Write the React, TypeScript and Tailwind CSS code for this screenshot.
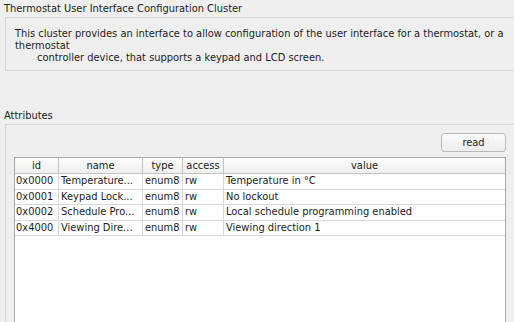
const rows = [
  { id: '0x0000', name: 'Temperature...', type: 'enum8', access: 'rw', value: 'Temperature in °C', h: 'h-[16px]' },
  { id: '0x0001', name: 'Keypad Lock...', type: 'enum8', access: 'rw', value: 'No lockout', h: 'h-[15px]' },
  { id: '0x0002', name: 'Schedule Pro...', type: 'enum8', access: 'rw', value: 'Local schedule programming enabled', h: 'h-[16px]' },
  { id: '0x4000', name: 'Viewing Dire...', type: 'enum8', access: 'rw', value: 'Viewing direction 1', h: 'h-[15px]' },
];

export default function App() {
  return (
    <div className="h-[322px] w-[514px] overflow-hidden bg-[#efefef] text-[9.88px] leading-[12px] text-[#1d1d1d] [font-family:'DejaVu_Sans',sans-serif]">
      <div className="pl-[4px] pt-[3px]">Thermostat User Interface Configuration Cluster</div>

      <div className="ml-[5px] mt-[2px] h-[54px] border-y border-l border-[#d6d6d6] pl-[9px] pt-[10px]">
        <div className="whitespace-pre">
          This cluster provides an interface to allow configuration of the user interface for a thermostat, or a
        </div>
        <div className="whitespace-pre">thermostat</div>
        <div className="whitespace-pre">{'       controller device, that supports a keypad and LCD screen.'}</div>
      </div>

      <div className="mt-[39px] pl-[4px]">Attributes</div>

      <div className="ml-[5px] mt-[2px] h-[300px] border-l border-t border-[#d6d6d6] pl-[8px] pr-[8px] pt-[8px]">
        <div className="flex justify-end">
          <button className="h-[19px] w-[65px] rounded-[3px] border border-[#b9b9b9] bg-gradient-to-b from-[#fbfbfb] to-[#ececec] text-[9.88px] leading-[12px] text-[#1d1d1d]">
            read
          </button>
        </div>

        <div className="mt-[5px] h-[200px] border border-[#a9a9a9] bg-white">
          <div className="grid h-[16px] grid-cols-[44px_84px_40px_41px_1fr] border-b border-[#c4c4c4] bg-gradient-to-b from-[#fcfcfc] to-[#efefef]">
            <div className="flex items-center justify-center border-r border-[#c4c4c4]">id</div>
            <div className="flex items-center justify-center border-r border-[#c4c4c4]">name</div>
            <div className="flex items-center justify-center border-r border-[#c4c4c4]">type</div>
            <div className="flex items-center justify-center border-r border-[#c4c4c4]">access</div>
            <div className="flex items-center justify-center">value</div>
          </div>
          {rows.map((r) => (
            <div
              key={r.id}
              className={`grid ${r.h} grid-cols-[44px_84px_40px_41px_1fr] border-b border-[#d8d8d8]`}
            >
              <div className="h-full border-r border-[#d8d8d8] pl-[1px] pt-[1px]">{r.id}</div>
              <div className="h-full border-r border-[#d8d8d8] pl-[2px] pt-[1px]">{r.name}</div>
              <div className="h-full border-r border-[#d8d8d8] pl-[2px] pt-[1px]">{r.type}</div>
              <div className="h-full border-r border-[#d8d8d8] pl-[2px] pt-[1px]">{r.access}</div>
              <div className="h-full pl-[2px] pt-[1px]">{r.value}</div>
            </div>
          ))}
        </div>
      </div>
    </div>
  );
}
